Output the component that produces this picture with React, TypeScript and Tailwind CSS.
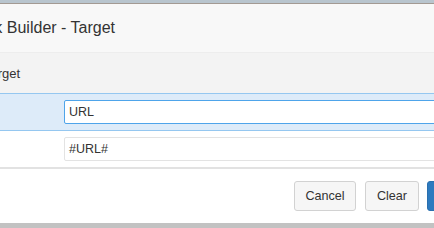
import React from "react";

export default function App() {
  return (
    <div className="w-[434px] h-[228px] overflow-hidden bg-white font-['Liberation_Sans',Arial,sans-serif] text-[#333] flex flex-col">
      <div className="h-[3px] shrink-0 bg-[#b9c5ce]" />
      <div className="h-px shrink-0 bg-[#a39a93]" />
      <div className="h-[49px] shrink-0 bg-[#f8f8f8] border-b border-[#ededed] flex items-center">
        <h4 className="ml-[-27px] text-[16px] leading-none whitespace-nowrap font-normal text-[#333]">
          Link Builder - Target
        </h4>
      </div>
      <div className="h-[40px] shrink-0 bg-[#f3f3f3] flex items-center">
        <span className="ml-[-16px] text-[13px] leading-none whitespace-nowrap text-[#333]">Target</span>
      </div>
      <div className="h-[38px] shrink-0 bg-[#ddebf9] border-y border-[#95c7f0] flex items-center pl-[64px]">
        <div className="h-[24px] flex-1 mr-[-20px] bg-white border border-[#4ea4ea] rounded-[2px] flex items-center pl-[4px] text-[12.5px] leading-none text-[#333]">
          URL
        </div>
      </div>
      <div className="h-[36px] shrink-0 bg-white flex items-center pl-[64px]">
        <div className="h-[24px] flex-1 mr-[-20px] bg-white border border-[#e3e3e3] rounded-[2px] flex items-center pl-[4px] text-[12.5px] leading-none text-[#333]">
          #URL#
        </div>
      </div>
      <div className="h-[2px] shrink-0 bg-[#e2e2e2]" />
      <div className="h-[54px] shrink-0 bg-white flex items-center pl-[294px]">
        <button className="w-[62px] h-[30px] shrink-0 bg-[#f6f6f6] border border-[#d2d2d2] rounded-[3px] text-[12.6px] leading-none text-[#333]">
          Cancel
        </button>
        <button className="ml-[9px] w-[54px] h-[30px] shrink-0 bg-[#f6f6f6] border border-[#d2d2d2] rounded-[3px] text-[12.6px] leading-none text-[#333]">
          Clear
        </button>
        <button className="ml-[8px] w-[60px] h-[30px] shrink-0 bg-[#2d7abf] border border-[#2a6fae] rounded-[3px] text-[12.6px] leading-none text-white">
          OK
        </button>
      </div>
      <div className="flex-1 bg-[#c2c2c2]" />
    </div>
  );
}
